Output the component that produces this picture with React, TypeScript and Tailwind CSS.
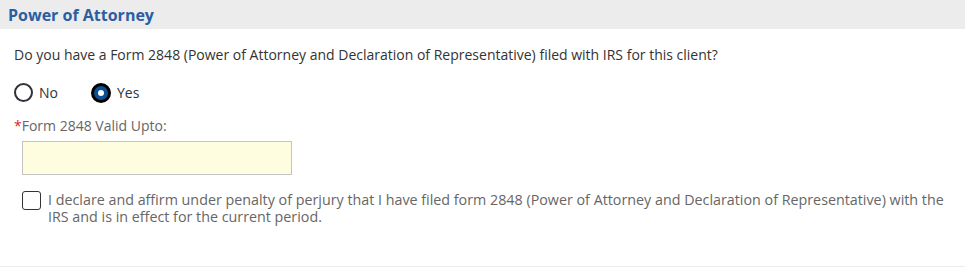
import React, { useState } from "react";

const font = { fontFamily: '"Open Sans", "Liberation Sans", sans-serif' };

const Radio = ({ checked, label, onClick }: { checked: boolean; label: string; onClick: () => void }) => (
  <label className="flex items-center gap-[6px] cursor-pointer" onClick={onClick}>
    {checked ? (
      <span className="w-[20px] h-[20px] rounded-full bg-black flex items-center justify-center">
        <span className="w-[14px] h-[14px] rounded-full bg-[#0b4f94] flex items-center justify-center">
          <span className="w-[6px] h-[6px] rounded-full bg-white" />
        </span>
      </span>
    ) : (
      <span className="w-[19px] h-[19px] rounded-full border-2 border-[#2f3338] bg-white" />
    )}
    <span className="text-[14px] text-[#333]">{label}</span>
  </label>
);

export default function App() {
  const [hasForm, setHasForm] = useState(true);
  const [agreed, setAgreed] = useState(false);

  return (
    <div className="w-[965px] h-[267px] bg-white border-b border-[#ececec]" style={font}>
      {/* Section header */}
      <div className="h-[29px] bg-[#ececec] flex items-center px-[8px]">
        <h2 className="text-[16px] font-bold text-[#2a5ea3]">Power of Attorney</h2>
      </div>

      <div className="pl-[14px] pr-[10px] pt-[16px]">
        <p className="text-[14px] text-[#333] leading-[20px]">
          Do you have a Form 2848 (Power of Attorney and Declaration of Representative) filed with IRS for this client?
        </p>

        <div className="flex items-center gap-[33px] mt-[17px]">
          <Radio checked={!hasForm} label="No" onClick={() => setHasForm(false)} />
          <Radio checked={hasForm} label="Yes" onClick={() => setHasForm(true)} />
        </div>

        <div className="mt-[13px] text-[14px] text-[#666] leading-[20px]">
          <span className="text-[#e0252b]">*</span>Form 2848 Valid Upto:
        </div>

        <input
          type="text"
          className="block ml-[8px] mt-[5px] w-[270px] h-[34px] bg-[#fffde0] border border-[#c4c4c4] outline-none px-2 text-[14px]"
        />

        <div className="flex items-start gap-[7px] mt-[15px] ml-[8px]">
          <button
            type="button"
            onClick={() => setAgreed(!agreed)}
            className="w-[19px] h-[19px] shrink-0 mt-[1px] rounded-[3px] border border-[#333] bg-white"
          />
          <p className="text-[14.3px] text-[#666] leading-[17px] mt-[1px]">
            I declare and affirm under penalty of perjury that I have filed form 2848 (Power of Attorney and Declaration of Representative) with the IRS and is in effect for the current period.
          </p>
        </div>
      </div>
    </div>
  );
}
